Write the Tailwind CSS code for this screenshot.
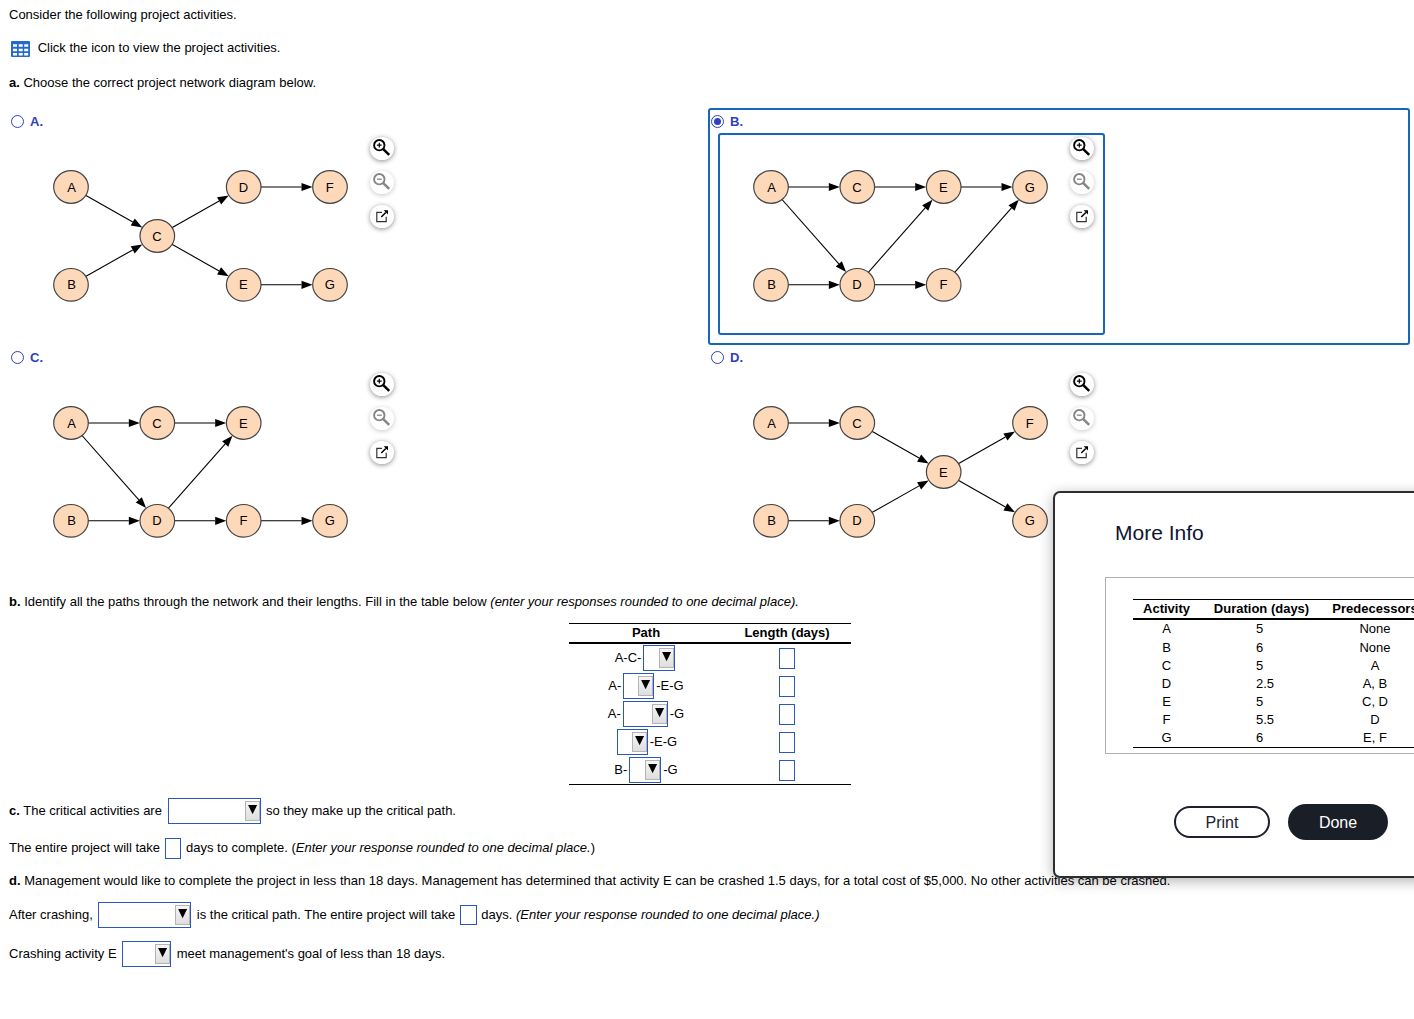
<!DOCTYPE html>
<html lang="en">
<head>
    <meta charset="UTF-8">
    <meta name="viewport" content="width=device-width, initial-scale=1.0">
    <script src="https://cdn.jsdelivr.net/npm/@tailwindcss/browser@4"></script>
    <title>Project Network</title>
</head>
<body class="bg-white text-black h-screen overflow-hidden font-['Liberation_Sans',Arial,sans-serif] text-[13px] leading-[15px] whitespace-nowrap">
    <!-- Shared symbols -->
    <svg class="hidden">
        <symbol id="zoomIn" viewBox="0 0 24 23">
            <circle cx="9.3" cy="8.2" r="5.2" fill="none" stroke="currentColor" stroke-width="1.900" />
            <path d="M13 11.900l6.200 6" fill="none" stroke="currentColor" stroke-width="2.600" />
            <path d="M6.900 8.200h4.800M9.300 5.800v4.800" stroke="currentColor" stroke-width="1.200" />
        </symbol>
        <symbol id="zoomOut" viewBox="0 0 24 23">
            <circle cx="9.3" cy="8.2" r="5.2" fill="none" stroke="currentColor" stroke-width="1.900" />
            <path d="M13 11.900l6.200 6" fill="none" stroke="currentColor" stroke-width="2.600" />
            <path d="M6.900 8.200h4.800" stroke="currentColor" stroke-width="1.300" />
        </symbol>
        <symbol id="popOut" viewBox="0 0 24 23">
            <path d="M12 7.300h-5.200v9.400h9.400v-5" fill="none" stroke="#333" stroke-width="1.200" />
            <path d="M11.300 12l4.500-4.500" stroke="currentColor" stroke-width="1.500" />
            <path d="M13.600 5.200h4.400v4.400z" fill="currentColor" />
        </symbol>
    </svg>

    <main class="pl-[9px] pt-[7px]">
        <p>Consider the following project activities.</p>
        <div class="mt-[18px] ml-[2px] flex">
            <svg class="w-[19px] h-4 mt-px mr-2" viewBox="0 0 19 16">
                <rect width="19" height="16" rx="1" fill="#2468d0" />
                <path d="M2 4.500h4M7.700 4.500h4M13.200 4.500h4M2 9h4M7.700 9h4M13.200 9h4M2 13.300h4M7.700 13.300h4M13.200 13.300h4" stroke="#fff" stroke-width="2.400" />
            </svg>
            <p class="-ml-[0.3px]">Click the icon to view the project activities.</p>
        </div>
        <p class="mt-[18px]"><b>a.</b> Choose the correct project network diagram below.</p>

        <!-- Answer choices -->
        <div id="choices" class="-ml-px mt-[18px] grid grid-cols-[700px_702px] grid-rows-[236px_236px]"></div>

        <p class="mt-[14px]"><b>b.</b> Identify all the paths through the network and their lengths. Fill in the table below <i>(enter your responses rounded to one decimal place).</i></p>

        <!-- Paths table -->
        <div class="mt-[14px] ml-[560px] w-[282px] border-y border-black">
            <div class="grid grid-cols-[154px_128px] h-5 pt-px border-b-2 border-black font-bold text-center">
                <span>Path</span>
                <span>Length (days)</span>
            </div>
            <div id="paths" class="grid grid-cols-[154px_128px] auto-rows-[28px] pt-px h-[140px] leading-[25px]"></div>
        </div>

        <div class="mt-[13px] flex leading-[25px]">
            <p><b>c.</b> The critical activities are</p>
            <span data-select class="w-[93px] ml-[6px] mr-[5px]"></span>
            <p>so they make up the critical path.</p>
        </div>
        <div class="mt-[14px] flex leading-[19px]">
            <p>The entire project will take</p>
            <span class="w-4 h-[21px] mx-[5px] border border-[#2a56c0]"></span>
            <p>days to complete. (<i>Enter your response rounded to one decimal place.</i>)</p>
        </div>
        <p class="mt-[14px]"><b>d.</b> Management would like to complete the project in less than 18 days. Management has determined that activity E can be crashed 1.5 days, for a total cost of $5,000. No other activities can be crashed.</p>
        <div class="mt-[14px] flex leading-[25px]">
            <p>After crashing,</p>
            <span data-select class="w-[93px] ml-[5px] mr-[6px]"></span>
            <p>is the critical path. The entire project will take</p>
            <span class="w-[17px] h-5 ml-[5px] mr-1 mt-[3px] border border-[#2a56c0]"></span>
            <p>days. <i>(Enter your response rounded to one decimal place.)</i></p>
        </div>
        <div class="mt-[13px] flex leading-[25px]">
            <p>Crashing activity E</p>
            <span data-select class="w-[49px] ml-[5px] mr-[6px]"></span>
            <p>meet management's goal of less than 18 days.</p>
        </div>
    </main>

    <!-- More Info dialog -->
    <div class="absolute left-[1053px] top-[491px] w-[420px] h-[387px] bg-white border-2 border-[#2d2e32] rounded-[7px] shadow-[0_3px_14px_rgba(0,0,0,0.3)]">
        <h2 class="mt-7 ml-[60px] text-[21px] leading-6 text-[#0d1530]">More Info</h2>
        <div class="mt-8 ml-[50px] h-[177px] border border-[#b0b0b0] pl-[27px] pt-[21px]">
            <div class="w-[294px] border-y border-black">
                <div class="grid grid-cols-[67px_123px_104px] h-5 pt-px border-b-2 border-black font-bold text-center">
                    <span>Activity</span>
                    <span>Duration (days)</span>
                    <span>Predecessors</span>
                </div>
                <div id="activities" class="leading-[17px]"></div>
            </div>
        </div>
        <div class="mt-[50px] ml-[119px] flex items-center gap-[18px] text-base">
            <button class="w-24 h-8 pt-px rounded-full border-2 border-[#1c2030] text-[#1c2030] leading-[27px]">Print</button>
            <button class="w-[100px] h-9 pt-px rounded-full bg-[#1a1e27] text-white">Done</button>
        </div>
    </div>

    <script>
        // Column and row centres of the network diagrams
        const cols = [35, 121.3, 207.7, 294];
        const rows = [33, 82, 130.8];
        const rx = 17.5, ry = 16.5;

        const choices = [
            { label: 'A.', nodes: { A: [0, 0], B: [0, 2], C: [1, 1], D: [2, 0], E: [2, 2], F: [3, 0], G: [3, 2] }, edges: ['AC', 'BC', 'CD', 'CE', 'DF', 'EG'] },
            { label: 'B.', selected: true, nodes: { A: [0, 0], B: [0, 2], C: [1, 0], D: [1, 2], E: [2, 0], F: [2, 2], G: [3, 0] }, edges: ['AC', 'CE', 'EG', 'AD', 'BD', 'DE', 'DF', 'FG'] },
            { label: 'C.', nodes: { A: [0, 0], B: [0, 2], C: [1, 0], D: [1, 2], E: [2, 0], F: [2, 2], G: [3, 2] }, edges: ['AC', 'CE', 'AD', 'BD', 'DE', 'DF', 'FG'] },
            { label: 'D.', nodes: { A: [0, 0], B: [0, 2], C: [1, 0], D: [1, 2], E: [2, 1], F: [3, 0], G: [3, 2] }, edges: ['AC', 'BD', 'CE', 'DE', 'EF', 'EG'] },
        ];

        function drawEdge(from, to) {
            const x1 = cols[from[0]], y1 = rows[from[1]];
            const x2 = cols[to[0]], y2 = rows[to[1]];
            const len = Math.hypot(x2 - x1, y2 - y1);
            const ux = (x2 - x1) / len, uy = (y2 - y1) / len;
            const r = 1 / Math.hypot(ux / rx, uy / ry);
            const tx = x2 - ux * r, ty = y2 - uy * r;
            const bx = tx - ux * 11, by = ty - uy * 11;
            return `<path d="M${x1} ${y1}L${bx} ${by}" stroke="#000" stroke-width="1.1" />
                <path d="M${tx} ${ty}L${bx - uy * 4.1} ${by + ux * 4.1}L${bx + uy * 4.1} ${by - ux * 4.1}z" />`;
        }

        function drawNetwork(choice) {
            const edges = choice.edges.map(e => drawEdge(choice.nodes[e[0]], choice.nodes[e[1]])).join('');
            const nodes = Object.entries(choice.nodes).map(([name, [c, r]]) => `
                <ellipse cx="${cols[c]}" cy="${rows[r]}" rx="${rx - 0.2}" ry="${ry - 0.2}" fill="#fdd8b9" stroke="#444" stroke-width="1.2" />
                <text x="${c ? cols[c] - 0.3 : cols[c] + 0.5}" y="${r === 2 ? 135 : rows[r] + 5}" text-anchor="middle">${name}</text>`).join('');
            return `<svg class="w-[330px] h-[165px] mt-[19px] ml-4" viewBox="0 0 330 165">${edges}${nodes}</svg>`;
        }

        const toolButton = 'block w-6 h-[23px] rounded-full bg-white text-black shadow-[0_1px_5px_rgba(0,0,0,0.45)]';
        const toolButtonOff = 'block w-6 h-[23px] rounded-full bg-white text-[#858585] shadow-[0_1px_5px_rgba(0,0,0,0.22)]';

        document.getElementById('choices').innerHTML = choices.map(choice => `
            <div class="${choice.selected ? 'h-[237px] border-2 rounded-[3px] border-[#1766ba]' : 'border-2 border-transparent'}">
                <div class="flex h-[23px] pl-px pt-[4px] text-[#3040bf] font-bold">
                    <span class="flex items-center justify-center w-[13px] h-[13px] mt-px mr-[6px] rounded-full border border-current">
                        ${choice.selected ? '<span class="w-[7px] h-[7px] rounded-full bg-current"></span>' : ''}
                    </span>
                    ${choice.label}
                </div>
                <div class="flex ml-2 w-[387px] h-[202px] border-2 rounded-[3px] ${choice.selected ? 'border-[#1766ba]' : 'border-transparent'}">
                    ${drawNetwork(choice)}
                    <div class="flex flex-col gap-[11px] ml-1 pt-[2px]">
                        <button class="${toolButton}"><svg class="w-6 h-[23px]"><use href="#zoomIn" /></svg></button>
                        <button class="${toolButtonOff}"><svg class="w-6 h-[23px]"><use href="#zoomOut" /></svg></button>
                        <button class="${toolButton}"><svg class="w-6 h-[23px]"><use href="#popOut" /></svg></button>
                    </div>
                </div>
            </div>`).join('');

        // Path rows: text before, dropdown width, text after
        const paths = [
            ['A-C-', 'w-[32px] mr-[2px]', ''],
            ['A-', 'w-[31px]', '-E-G'],
            ['A-', 'w-[45px]', '-G'],
            ['', 'w-[31px] ml-[2px]', '-E-G'],
            ['B-', 'w-[32px]', '-G'],
        ];
        document.getElementById('paths').innerHTML = paths.map(([before, width, after]) => `
            <div class="flex justify-center gap-[2px]">
                ${before ? `<span>${before}</span>` : ''}<span data-select class="${width}"></span>${after ? `<span>${after}</span>` : ''}
            </div>
            <span class="w-4 h-[21px] mt-[3px] mx-auto border border-[#2a56c0]"></span>`).join('');

        // Dropdown boxes
        document.querySelectorAll('[data-select]').forEach(box => {
            box.classList.add('flex', 'justify-end', 'items-center', 'h-[26px]', 'shrink-0', 'border', 'border-[#2a56c0]', 'bg-white');
            box.innerHTML = `<span class="w-[15px] h-5 border border-[#b4b4b4] bg-linear-to-b from-[#f6f6f6] to-[#dedede]">
                <svg class="w-[13px] h-[18px]" viewBox="0 0 13 18"><path d="M2.100 3h9l-4.500 9.300z" /></svg></span>`;
        });

        const activities = [
            ['A', '5', 'None'],
            ['B', '6', 'None'],
            ['C', '5', 'A'],
            ['D', '2.5', 'A, B'],
            ['E', '5', 'C, D'],
            ['F', '5.5', 'D'],
            ['G', '6', 'E, F'],
        ];
        document.getElementById('activities').innerHTML = activities.map(([name, days, before]) => `
            <div class="grid grid-cols-[67px_123px_104px] h-[18px] first:h-[19px] text-center">
                <span>${name}</span><span class="text-left pl-[56px]">${days}</span><span>${before}</span>
            </div>`).join('');
    </script>
</body>
</html>
